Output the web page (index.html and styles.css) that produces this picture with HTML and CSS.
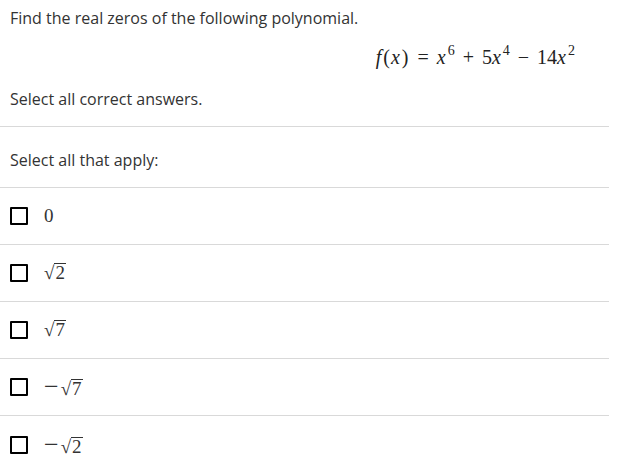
FILE: index.html
```html
<!DOCTYPE html>
<html>
<head>
<meta charset="utf-8">
<link rel="stylesheet" href="styles.css">
</head>
<body>
<div class="page">
  <div class="question">
    <p class="prompt">Find the real zeros of the following polynomial.</p>
    <div class="formula"><span class="mi">f</span><span class="mo">(</span><span class="mi">x</span><span class="mo">)</span><span class="rel">=</span><span class="mi">x</span><sup>6</sup><span class="bin">+</span>5<span class="mi">x</span><sup>4</sup><span class="bin">−</span>14<span class="mi">x</span><sup>2</sup></div>
    <p class="instr">Select all correct answers.</p>
  </div>
  <div class="section">Select all that apply:</div>
  <ul class="options">
    <li class="opt"><span class="box"></span><span class="math">0</span></li>
    <li class="opt"><span class="box"></span><span class="math"><span class="rad">√</span><span class="radicand">2</span></span></li>
    <li class="opt"><span class="box"></span><span class="math"><span class="rad">√</span><span class="radicand">7</span></span></li>
    <li class="opt"><span class="box"></span><span class="math"><span class="neg">−</span><span class="rad">√</span><span class="radicand">7</span></span></li>
    <li class="opt"><span class="box"></span><span class="math"><span class="neg">−</span><span class="rad">√</span><span class="radicand">2</span></span></li>
  </ul>
</div>
</body>
</html>
```
FILE: styles.css
```css
* { box-sizing: border-box; }
body {
  margin: 0;
  background: #fff;
  font-family: "Open Sans", "Liberation Sans", sans-serif;
  font-size: 16px;
  color: #333;
}
.page { width: 609px; }
.question {
  padding: 6px 10px 0 10px;
  border-bottom: 1px solid #d9d9d9;
  height: 127px;
}
.prompt { margin: 0; line-height: 24px; }
.formula {
  font-family: "Liberation Serif", serif;
  font-size: 20px;
  color: #222;
  text-align: right;
  padding-right: 24px;
  margin-top: 15px;
  line-height: 24px;
  height: 24px;
}
.formula .mi { font-style: italic; padding-right: 1px; }
.formula .mo { padding: 0 1px; }
.formula sup { font-size: 14px; vertical-align: 9px; line-height: 0; padding-left: 1px; }
.formula .rel { margin: 0 8px; }
.formula .bin { margin: 0 8px; }
.instr { margin: 18px 0 0 0; line-height: 24px; }
.section {
  padding: 0 10px;
  height: 61px;
  line-height: 66px;
  border-bottom: 1px solid #d9d9d9;
}
.options { list-style: none; margin: 0; padding: 0; }
.opt {
  height: 57px;
  border-bottom: 1px solid #d9d9d9;
  display: flex;
  align-items: center;
  padding-left: 10px;
  gap: 16px;
}
.opt:last-child { border-bottom: none; }
.box {
  width: 18px;
  height: 18px;
  border: 2px solid #000;
  border-radius: 1px;
  flex: none;
}
.math {
  font-family: "Liberation Serif", serif;
  font-size: 19px;
  color: #333;
  display: flex;
  align-items: baseline;
}
.neg { font-size: 26px; margin-right: 2px; line-height: 1; }
.rad { font-size: 19px; font-weight: bold; }
.radicand { border-top: 1px solid #333; padding: 0 1px; line-height: 18px; }
```
